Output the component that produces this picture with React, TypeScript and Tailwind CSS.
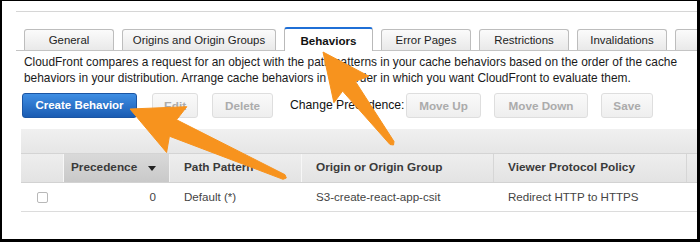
import React from "react";

type P = [number, number];

function arrowPoints(tip: P, tail: P, headLen: number, headHalf: number, baseHalf: number, tailHalf: number, sweep: number): string {
  const dx = tail[0] - tip[0];
  const dy = tail[1] - tip[1];
  const len = Math.hypot(dx, dy);
  const ux = dx / len;
  const uy = dy / len;
  const px = -uy;
  const py = ux;
  const bx = tip[0] + ux * headLen;
  const by = tip[1] + uy * headLen;
  const wx = tip[0] + ux * (headLen + sweep);
  const wy = tip[1] + uy * (headLen + sweep);
  const pts: P[] = [
    tip,
    [wx + px * headHalf, wy + py * headHalf],
    [bx + px * baseHalf, by + py * baseHalf],
    [tail[0] + px * tailHalf, tail[1] + py * tailHalf],
    [tail[0] + ux * tailHalf, tail[1] + uy * tailHalf],
    [tail[0] - px * tailHalf, tail[1] - py * tailHalf],
    [bx - px * baseHalf, by - py * baseHalf],
    [wx - px * headHalf, wy - py * headHalf],
  ];
  return pts.map((p) => `${p[0].toFixed(1)},${p[1].toFixed(1)}`).join(" ");
}

const font = { fontFamily: '"Liberation Sans", Arial, Helvetica, sans-serif' };

function Tab({ label, w, active }: { label: string; w: string; active?: boolean }) {
  if (active) {
    return (
      <div
        className={`${w} h-[24px] -mb-px flex items-center justify-center bg-white border-t-2 border-t-[#1f6fd6] border-x border-x-[#b9b9b9] rounded-t-[3px] text-[11.6px] font-bold text-[#111] pt-[1px]`}
      >
        {label}
      </div>
    );
  }
  return (
    <div
      className={`${w} h-[21px] shrink-0 flex items-center justify-center bg-gradient-to-b from-[#fbfbfb] to-[#e9e9e9] border-t border-x border-[#bdbdbd] rounded-t-[3px] text-[11.4px] text-[#222] pt-[1px]`}
    >
      {label}
    </div>
  );
}

function DisabledButton({ label, w }: { label: string; w: string }) {
  return (
    <div
      className={`${w} h-[25px] shrink-0 flex items-center justify-center rounded-[3px] border border-[#dedede] bg-gradient-to-b from-[#fafafa] to-[#eeeeee] text-[11.7px] font-bold text-[#ababab]`}
    >
      {label}
    </div>
  );
}

export default function App() {
  const a1 = arrowPoints([130, 109], [284, 177], 47, 25, 9, 2.5, 4);
  const a2 = arrowPoints([323, 52], [392, 143], 43, 22, 8, 2.5, 4);
  return (
    <div className="relative w-[700px] h-[242px] overflow-hidden" style={font}>
      <div className="w-[700px] h-[242px] bg-white border-l-2 border-t border-r-[3px] border-b-[3px] border-black overflow-hidden">
        <div className="ml-[14px] mt-[10px] border-t border-[#d6d6d6]" />
        <div className="ml-[14px] h-[39px] flex items-end gap-[8px] pl-[8px] border-b border-[#c4c4c4]">
          <Tab label="General" w="w-[90px]" />
          <Tab label="Origins and Origin Groups" w="w-[154px]" />
          <Tab label="Behaviors" w="w-[89px] shrink-0" active />
          <Tab label="Error Pages" w="w-[90px]" />
          <Tab label="Restrictions" w="w-[90px]" />
          <Tab label="Invalidations" w="w-[90px]" />
          <Tab label="" w="w-[90px]" />
        </div>
        <div className="ml-[22px] mt-[3px] text-[11.9px] leading-[16px] text-[#1a1a1a] whitespace-nowrap">
          CloudFront compares a request for an object with the path patterns in your cache behaviors based on the order of the cache
          <br />
          behaviors in your distribution. Arrange cache behaviors in the order in which you want CloudFront to evaluate them.
        </div>
        <div className="ml-[20px] mt-[7px] flex items-center">
          <div className="w-[115px] h-[25px] shrink-0 flex items-center justify-center rounded-[3px] border border-[#1b55a3] bg-gradient-to-b from-[#3f8ee3] to-[#1a5cb3] text-[11.5px] font-bold text-white">
            Create Behavior
          </div>
          <div className="ml-[15px]">
            <DisabledButton label="Edit" w="w-[46px]" />
          </div>
          <div className="ml-[14px]">
            <DisabledButton label="Delete" w="w-[61px]" />
          </div>
          <div className="ml-[17px] w-[116px] shrink-0 whitespace-nowrap text-[12.2px] text-[#111]">Change Precedence:</div>
          <DisabledButton label="Move Up" w="w-[75px]" />
          <div className="ml-[13px]">
            <DisabledButton label="Move Down" w="w-[94px]" />
          </div>
          <div className="ml-[13px]">
            <DisabledButton label="Save" w="w-[52px]" />
          </div>
        </div>
        <div className="ml-[19px] mt-[11px] w-[700px]">
          <div className="h-[25px] bg-gradient-to-b from-[#f0f0f0] to-[#e6e6e6] border-b border-[#d4d4d4]" />
          <div className="h-[29px] flex text-[11.8px] font-bold text-[#3a3a3a] border-b border-[#d2d2d2] bg-gradient-to-b from-[#eeeeee] to-[#e3e3e3]">
            <div className="w-[43px] shrink-0 border-r border-[#f7f7f7]" />
            <div className="w-[106px] shrink-0 flex items-center pl-[7px] pr-[13px] justify-between bg-gradient-to-b from-[#d9d9d9] to-[#c9c9c9] border-r border-[#f2f2f2]">
              <span>Precedence</span>
              <svg width="8" height="5" viewBox="0 0 8 5">
                <path d="M0 0 H8 L4 5 Z" fill="#222" />
              </svg>
            </div>
            <div className="w-[132px] shrink-0 flex items-center pl-[14px] border-r border-[#f7f7f7]">Path Pattern</div>
            <div className="w-[192px] shrink-0 flex items-center pl-[14px] border-r border-[#d6d6d6]">Origin or Origin Group</div>
            <div className="w-[193px] shrink-0 flex items-center pl-[14px] border-r border-[#d6d6d6]">Viewer Protocol Policy</div>
            <div className="flex-1" />
          </div>
          <div className="h-[29px] flex items-center text-[11.6px] text-[#444] border-b border-[#dcdcdc]">
            <div className="w-[43px] shrink-0 flex justify-center">
              <div className="w-[11px] h-[11px] rounded-[2px] border border-[#b8b8b8] bg-white" />
            </div>
            <div className="w-[106px] shrink-0 text-right pr-[14px]">0</div>
            <div className="w-[132px] shrink-0 pl-[14px]">Default (*)</div>
            <div className="w-[192px] shrink-0 pl-[14px]">S3-create-react-app-csit</div>
            <div className="w-[193px] shrink-0 pl-[14px]">Redirect HTTP to HTTPS</div>
          </div>
        </div>
      </div>
      <svg className="absolute left-0 top-0 pointer-events-none" width="700" height="242" viewBox="0 0 700 242">
        <polygon points={a1} fill="#f7931e" stroke="#f7931e" strokeWidth="1" strokeLinejoin="round" />
        <polygon points={a2} fill="#f7931e" stroke="#f7931e" strokeWidth="1" strokeLinejoin="round" />
      </svg>
    </div>
  );
}
